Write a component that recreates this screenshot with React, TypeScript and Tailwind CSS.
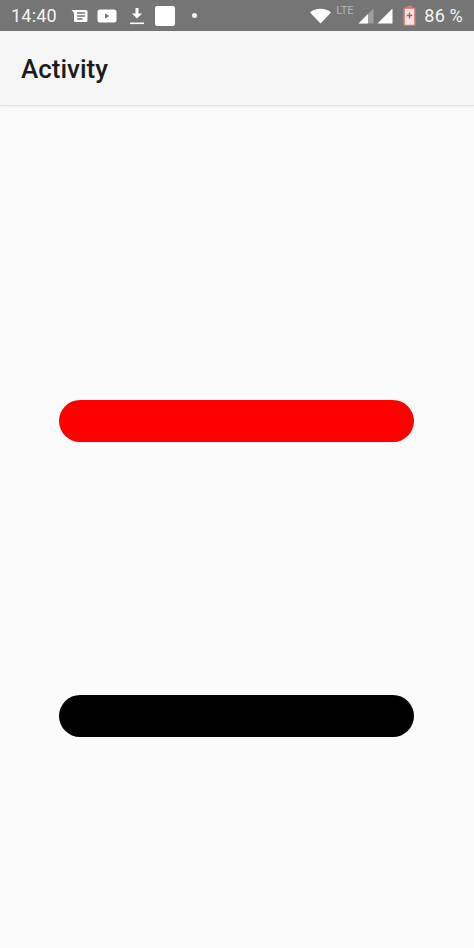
export default function App() {
  return (
    <div className="flex h-[948px] w-[474px] flex-col overflow-hidden bg-[#fafafa] font-['Roboto',sans-serif]">
      <div className="flex h-[31px] shrink-0 items-center bg-[#757575] text-white">
        <span className="ml-[11px] w-[46px] text-[18px] leading-none tracking-[0.2px] text-[#f4f4f4]">14:40</span>
        <svg className="ml-[14px]" width="17" height="14" viewBox="0 0 17 14">
          <path fill="#fff" fillRule="evenodd" d="M0.5 1H15a1.5 1.5 0 0 1 1.5 1.5V11.5a1.5 1.5 0 0 1-1.5 1.5H4.5A1.5 1.5 0 0 1 3 11.5V4ZM6 3.2V4.8H14V3.2ZM6 6.2V7.8H14V6.2ZM6 9.2V10.8H11.5V9.2Z" />
        </svg>
        <svg className="ml-[9px]" width="20" height="14" viewBox="0 0 20 14">
          <path fill="#fff" fillRule="evenodd" d="M3 0.5H17A2.5 2.5 0 0 1 19.5 3V11A2.5 2.5 0 0 1 17 13.5H3A2.5 2.5 0 0 1 0.5 11V3A2.5 2.5 0 0 1 3 0.5ZM8 4.5V9.5L12.5 7Z" />
        </svg>
        <svg className="ml-[13px]" width="14" height="18" viewBox="0 0 14 18">
          <path fill="#fff" d="M5.5 1H8.5V6.5H12L7 11.5L2 6.5H5.5Z" />
          <rect x="0" y="15.5" width="14" height="1.6" fill="#fff" />
        </svg>
        <div className="ml-[11px] h-[20px] w-[20px] rounded-[2px] bg-white" />
        <div className="ml-[17px] h-[5px] w-[5px] rounded-full bg-[#f2f2f2]" />
        <div className="flex-1" />
        <svg width="21" height="16" viewBox="0 0 21 16">
          <path fill="#fff" d="M0 4.5C2.8 2 6.4 0.8 10.5 0.8S18.2 2 21 4.5L10.5 15.5Z" />
        </svg>
        <span className="mb-[10px] ml-[5px] w-[19px] text-[11px] leading-none text-[#b5b5b5]">LTE</span>
        <svg className="ml-[3px] mt-[1px]" width="16" height="16" viewBox="0 0 16 16">
          <path fill="#9e9e9e" d="M15.5 0.5V15.5H0.5Z" />
          <path fill="#fff" d="M10 6V15.5H0.5Z" />
        </svg>
        <svg className="ml-[3px] mt-[1px]" width="16" height="16" viewBox="0 0 16 16">
          <path fill="#fff" d="M15.5 0.5V15.5H0.5Z" />
        </svg>
        <svg className="ml-[10px]" width="13" height="20" viewBox="0 0 13 20">
          <rect x="4" y="0" width="5" height="2" fill="#d9827f" />
          <rect x="1" y="2" width="11" height="17.5" rx="1" fill="#f6e4e3" stroke="#d9706c" strokeWidth="1.6" />
          <path d="M6.5 6.5V12.5M3.7 9.5H9.3" stroke="#d8434a" strokeWidth="1.3" />
        </svg>
        <span className="ml-[8px] mr-[11px] text-[18px] leading-none tracking-[0.2px] text-[#f4f4f4]">86 %</span>
      </div>
      <header className="flex h-[75px] shrink-0 items-center border-b border-[#e6e6e6] bg-[#f5f5f5] pl-[21px] shadow-[0_1px_2px_rgba(0,0,0,0.05)]">
        <h1 className="pt-[1px] text-[26px] font-medium leading-none text-[#1c1c1c]">Activity</h1>
      </header>
      <main className="flex flex-1 flex-col gap-[253px] pl-[59px] pt-[294px]">
        <div className="h-[42px] w-[355px] rounded-[21px] bg-[#ff0000]" />
        <div className="h-[42px] w-[355px] rounded-[21px] bg-black" />
      </main>
    </div>
  );
}
